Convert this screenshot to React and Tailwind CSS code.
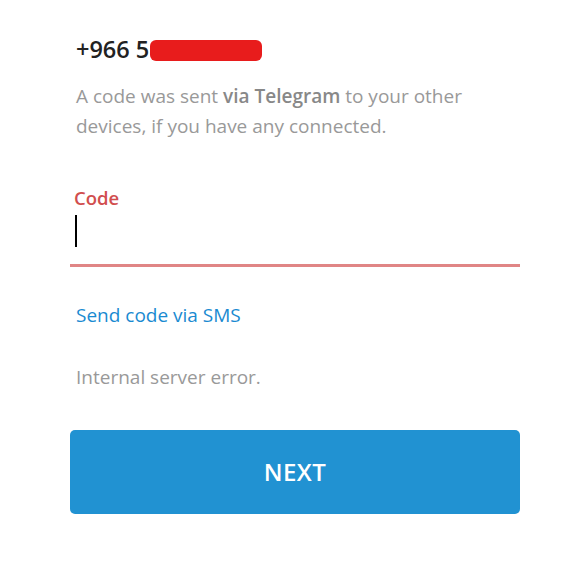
import React from "react";

export default function App() {
  return (
    <div
      className="w-[587px] h-[587px] bg-white"
      style={{ fontFamily: '"Open Sans", "Noto Sans", sans-serif' }}
    >
      <div className="ml-[70px] w-[450px] pt-[32px]">
        <div className="px-[6px]">
          <div className="flex items-center h-[36px] text-[23.5px] font-semibold text-[#222]">
            <span>+966 5</span>
            <span className="ml-[1px] w-[112px] h-[21px] rounded-[6px] bg-[#e81c1c]" />
          </div>
          <p className="mt-[13px] text-[19px] leading-[30px] text-[#999]">
            A code was sent <span className="font-semibold text-[#888]">via Telegram</span> to your
            other devices, if you have any connected.
          </p>
        </div>

        <div className="mt-[45px]">
          <div className="px-[4px] text-[18.5px] font-semibold leading-[24px] text-[#d14e4e]">Code</div>
          <div className="flex items-center h-[40px] px-[5px] pt-[2px]">
            <span className="w-[2px] h-[32px] bg-black" />
          </div>
          <div className="mt-[14px] h-[3px] bg-[#e08585]" />
        </div>

        <div className="px-[6px] mt-[35px] text-[19px] leading-[26px] text-[#1a8ad1]">Send code via SMS</div>
        <div className="px-[6px] mt-[36px] text-[19px] leading-[26px] text-[#999]">Internal server error.</div>

        <button className="mt-[40px] w-[450px] h-[84px] rounded-[5px] bg-[#2192d2] text-white text-[24px] font-semibold tracking-[0.5px]">
          NEXT
        </button>
      </div>
    </div>
  );
}
